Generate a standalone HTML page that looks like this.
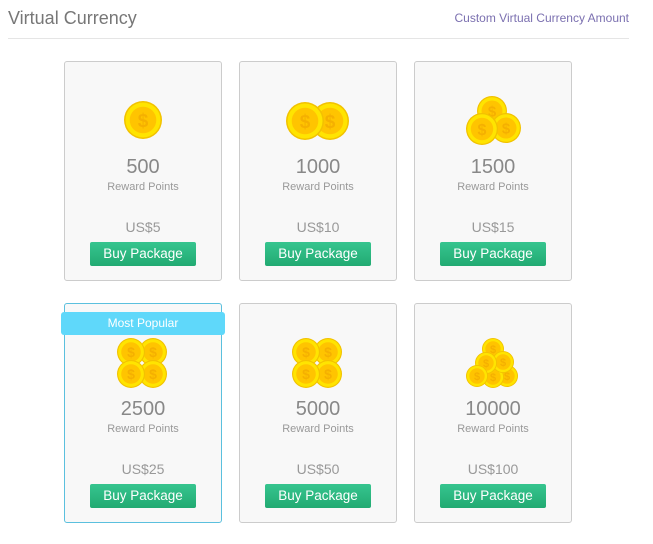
<!DOCTYPE html>
<html><head><meta charset="utf-8"><style>
body{margin:0;width:653px;height:544px;background:#fff;font-family:"Liberation Sans",sans-serif;position:relative;overflow:hidden}
.h{position:absolute;left:8px;top:8px;font-size:18px;color:#777}
.l{position:absolute;right:24px;top:11px;font-size:12px;color:#7b70b0}
.line{position:absolute;left:8px;top:38px;width:621px;height:1px;background:#e5e5e5}
.c{position:absolute;width:156px;height:218px;border:1px solid #ccc;border-radius:3px;background:#f8f8f8}
.c.p{border-color:#5bc0de}
.n{position:absolute;top:94px;width:100%;text-align:center;font-size:20px;color:#888}
.r{position:absolute;top:119px;width:100%;text-align:center;font-size:11px;color:#999}
.pr{position:absolute;top:157px;width:100%;text-align:center;font-size:14px;color:#999}
.b{position:absolute;left:25px;top:180px;width:106px;height:24px;background:linear-gradient(#36c58f,#22aa72);border-radius:2px;color:#fff;font-size:13.5px;text-align:center;line-height:23px}
.rb{position:absolute;left:61px;top:312px;width:164px;height:23px;background:#5fd8fa;border-radius:3px;color:#fff;font-size:12px;text-align:center;line-height:22px}
svg{position:absolute;left:0;top:0}
</style></head><body>
<div class="h">Virtual Currency</div>
<div class="l">Custom Virtual Currency Amount</div>
<div class="line"></div>
<svg width="653" height="544" style="z-index:2">
<defs><g id="k"><circle r="1" fill="#f2c200"/><circle r="0.92" fill="#ffe400"/><circle r="0.7" fill="#ffc400"/><text y="0.36" font-size="1" text-anchor="middle" fill="#f5b000" font-family="Liberation Sans" font-weight="bold">$</text></g></defs>
</svg>
<div class="c" style="left:64px;top:61px"><div class="n">500</div><div class="r">Reward Points</div><div class="pr">US$5</div><div class="b">Buy Package</div></div>
<div class="c" style="left:239px;top:61px"><div class="n">1000</div><div class="r">Reward Points</div><div class="pr">US$10</div><div class="b">Buy Package</div></div>
<div class="c" style="left:414px;top:61px"><div class="n">1500</div><div class="r">Reward Points</div><div class="pr">US$15</div><div class="b">Buy Package</div></div>
<div class="c p" style="left:64px;top:303px"><div class="n">2500</div><div class="r">Reward Points</div><div class="pr">US$25</div><div class="b">Buy Package</div></div>
<div class="c" style="left:239px;top:303px"><div class="n">5000</div><div class="r">Reward Points</div><div class="pr">US$50</div><div class="b">Buy Package</div></div>
<div class="c" style="left:414px;top:303px"><div class="n">10000</div><div class="r">Reward Points</div><div class="pr">US$100</div><div class="b">Buy Package</div></div>
<div class="rb">Most Popular</div>
<svg width="653" height="544">
<use href="#k" transform="translate(143,120) scale(19)"/>
<use href="#k" transform="translate(330,121) scale(19)"/>
<use href="#k" transform="translate(305,121) scale(19)"/>
<use href="#k" transform="translate(492,111) scale(15)"/>
<use href="#k" transform="translate(506,128) scale(15)"/>
<use href="#k" transform="translate(482,129) scale(16)"/>
<use href="#k" transform="translate(153,352) scale(14)"/>
<use href="#k" transform="translate(131,352) scale(14)"/>
<use href="#k" transform="translate(153,374) scale(14)"/>
<use href="#k" transform="translate(131,374) scale(14)"/>
<use href="#k" transform="translate(328,352) scale(14)"/>
<use href="#k" transform="translate(306,352) scale(14)"/>
<use href="#k" transform="translate(328,374) scale(14)"/>
<use href="#k" transform="translate(306,374) scale(14)"/>
<use href="#k" transform="translate(493,349) scale(11)"/>
<use href="#k" transform="translate(507,376) scale(11)"/>
<use href="#k" transform="translate(493,377) scale(11)"/>
<use href="#k" transform="translate(503,362) scale(11)"/>
<use href="#k" transform="translate(486,363) scale(11)"/>
<use href="#k" transform="translate(477,376) scale(11)"/>
</svg>
</body></html>
